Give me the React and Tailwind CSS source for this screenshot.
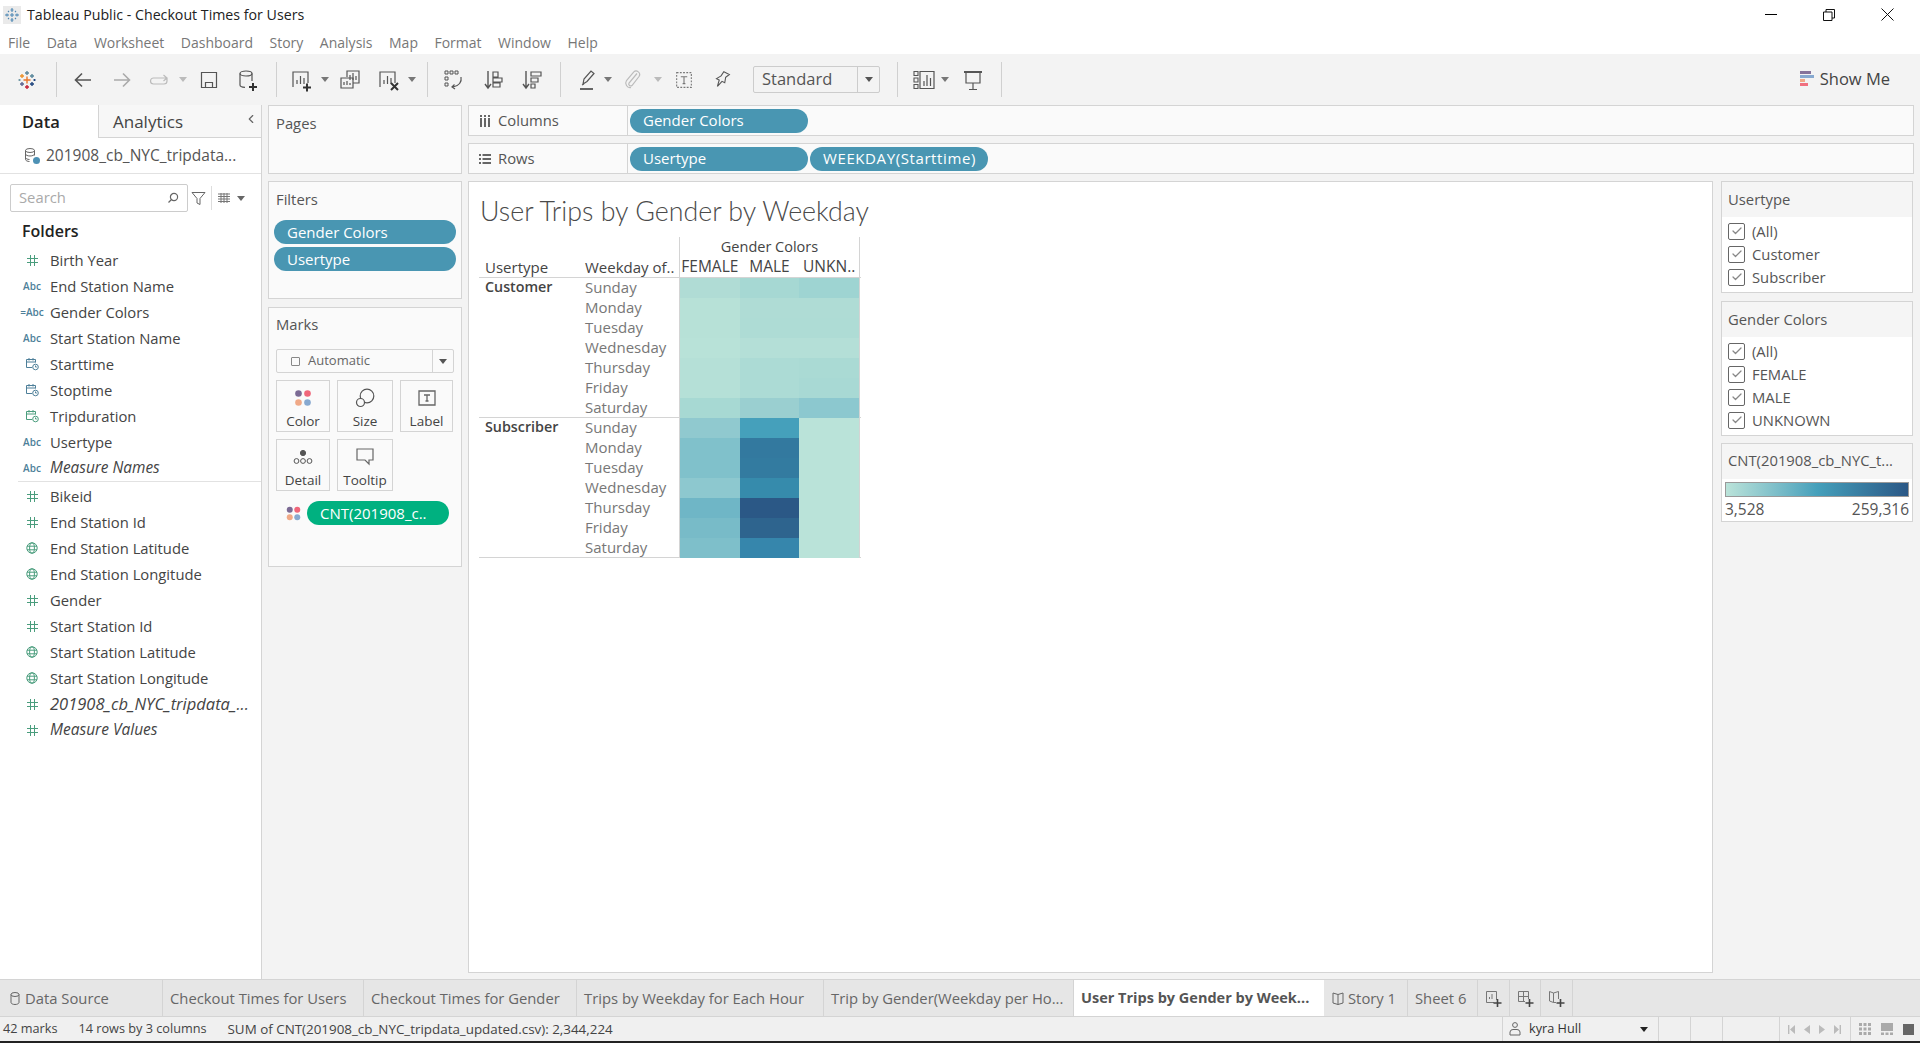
import { Check, ChevronLeft } from "lucide-react";

const G = "#4a9d7d";
const B = "#4d7f99";

const fields = [
  { name: "Birth Year", icon: "hash", color: G },
  { name: "End Station Name", icon: "abc", color: B },
  { name: "Gender Colors", icon: "calc", color: B },
  { name: "Start Station Name", icon: "abc", color: B },
  { name: "Starttime", icon: "date", color: B },
  { name: "Stoptime", icon: "date", color: B },
  { name: "Tripduration", icon: "date", color: G },
  { name: "Usertype", icon: "abc", color: B },
  { name: "Measure Names", icon: "abc", color: B, italic: "text-[15.4px]" },
];

const measures = [
  { name: "Bikeid", icon: "hash", color: G },
  { name: "End Station Id", icon: "hash", color: G },
  { name: "End Station Latitude", icon: "globe", color: G },
  { name: "End Station Longitude", icon: "globe", color: G },
  { name: "Gender", icon: "hash", color: G },
  { name: "Start Station Id", icon: "hash", color: G },
  { name: "Start Station Latitude", icon: "globe", color: G },
  { name: "Start Station Longitude", icon: "globe", color: G },
  { name: "201908_cb_NYC_tripdata_...", icon: "hash", color: G, italic: "text-[16.5px]" },
  { name: "Measure Values", icon: "hash", color: G, italic: "text-[15.5px]" },
];

const days = ["Sunday", "Monday", "Tuesday", "Wednesday", "Thursday", "Friday", "Saturday"];

const customer = [
  ["#b0dcd5", "#a6d8d3", "#9ed4d2"],
  ["#b7e1d7", "#afdcd5", "#afdcd5"],
  ["#b7e1d7", "#aedcd5", "#aedcd5"],
  ["#b8e2d8", "#b4dfd7", "#b4dfd7"],
  ["#b5e0d7", "#acdbd5", "#aadad4"],
  ["#b5e0d7", "#acdbd5", "#a8d9d4"],
  ["#a7d9d3", "#9acfd0", "#8cc8cf"],
];

const subscriber = [
  ["#90c9cf", "#45a0bb", "#bae3d9"],
  ["#80c1cb", "#33799f", "#bae3d9"],
  ["#80c1cb", "#337ba0", "#bae3d9"],
  ["#8dc8cf", "#368bac", "#bae3d9"],
  ["#6fb6c6", "#2b5886", "#bae3d9"],
  ["#78bbc8", "#2e648e", "#bae3d9"],
  ["#7ebfca", "#3686ac", "#bae3d9"],
];

const Icon = ({ children, stroke = "#555", size = 24 }) => (
  <svg width={size} height={size} viewBox="0 0 24 24" fill="none" stroke={stroke} strokeWidth="1.2">
    {children}
  </svg>
);

const Caret = ({ color = "#777" }) => (
  <svg width="8" height="5" viewBox="0 0 8 5" className="shrink-0">
    <path d="M0 0h8L4 5z" fill={color} />
  </svg>
);

const Divider = ({ className }) => <div className={`w-px h-[35px] bg-[#d0d0d0] shrink-0 ${className}`} />;

const Slot = ({ className, children }) => (
  <div className={`w-6 h-6 flex items-center justify-center shrink-0 ${className}`}>{children}</div>
);

const Cross = ({ x, y, s, c }) => (
  <path d={`M${x - s} ${y}H${x + s}M${x} ${y - s}V${y + s}`} stroke={c} strokeWidth="1.4" fill="none" />
);

const TableauLogo = () => (
  <svg width="18" height="20" viewBox="0 0 18 20">
    <Cross x={9} y={10} s={3.5} c="#e8762b" />
    <Cross x={9} y={3} s={2} c="#5b879b" />
    <Cross x={9} y={17} s={2} c="#c72037" />
    <Cross x={4} y={6} s={2} c="#eb912b" />
    <Cross x={14} y={6} s={2} c="#59879b" />
    <Cross x={4} y={14} s={2} c="#5c6692" />
    <Cross x={14} y={14} s={2} c="#1f447e" />
    <Cross x={1.5} y={10} s={1} c="#7099a6" />
    <Cross x={16.5} y={10} s={1} c="#1f457e" />
  </svg>
);

const FieldIcon = ({ type, color }) => {
  if (type === "abc" || type === "calc") {
    return (
      <span className="text-[10px] font-semibold leading-none whitespace-nowrap" style={{ color }}>
        {type === "calc" ? "=Abc" : "Abc"}
      </span>
    );
  }
  if (type === "hash") {
    return (
      <svg width="11" height="11" viewBox="0 0 11 11" fill="none" stroke={color} strokeWidth="1">
        <path d="M3.5 0v11M7.5 0v11M0 3.5h11M0 7.5h11" />
      </svg>
    );
  }
  if (type === "globe") {
    return (
      <svg width="12" height="12" viewBox="0 0 12 12" fill="none" stroke={color} strokeWidth="1">
        <circle cx="6" cy="6" r="5.2" />
        <ellipse cx="6" cy="6" rx="2.4" ry="5.2" />
        <path d="M1 4.2h10M1 7.8h10" />
      </svg>
    );
  }
  return (
    <svg width="14" height="14" viewBox="0 0 14 14" fill="none" stroke={color} strokeWidth="1">
      <path d="M7 10.5H1.5V2.5h9v3M1.5 5h9M4 1v2.5M8 1v2.5" />
      <circle cx="10.5" cy="10" r="2.8" />
      <path d="M10.5 8.5V10h1.3" />
    </svg>
  );
};

const FieldRow = ({ field }) => (
  <div className="h-[26px] flex items-center">
    <div className="w-[20px] ml-[22px] flex justify-center shrink-0">
      <FieldIcon type={field.icon} color={field.color} />
    </div>
    <span className={`ml-[8px] text-[#444] whitespace-nowrap ${field.italic ? `italic ${field.italic}` : "text-[14.8px]"}`}>{field.name}</span>
  </div>
);

const Pill = ({ children, className }) => (
  <div className={`h-6 rounded-full bg-[#4996b2] text-[15px] text-white flex items-center pl-[13px] shrink-0 whitespace-nowrap ${className}`}>
    {children}
  </div>
);

const MarkButton = ({ label, className, children }) => (
  <div className={`h-[52px] border border-[#d4d4d4] flex flex-col items-center justify-end pb-px ${className}`}>
    <div className="h-[26px] mb-px flex items-center justify-center">{children}</div>
    <span className="text-[13.5px] text-[#444] leading-[18px]">{label}</span>
  </div>
);

const FourDots = () => (
  <svg width="18" height="18" viewBox="0 0 18 18">
    <circle cx="4.5" cy="4.5" r="3.3" fill="#7b6a94" />
    <circle cx="13.5" cy="4.5" r="3.3" fill="#f0667a" />
    <circle cx="4.5" cy="13.5" r="3.3" fill="#f0a987" />
    <circle cx="13.5" cy="13.5" r="3.3" fill="#87a9d0" />
  </svg>
);

const Shelf = ({ label, icon, children }) => (
  <div className="h-[31px] flex border-y border-r border-[#d4d4d4] bg-[#fafafa]">
    <div className="w-[160px] border-x border-[#d4d4d4] flex items-center shrink-0">
      <div className="w-[29px] flex justify-center pl-[2px]">{icon}</div>
      <span className="text-[14.8px] text-[#555]">{label}</span>
    </div>
    <div className="flex items-center pl-[2px] gap-[2px]">{children}</div>
  </div>
);

const HeatGroup = ({ label, rows }) => (
  <div className="flex border-b border-[#d4d4d4] h-[140px]">
    <div className="w-[106px] pl-[6px] h-5 pb-[2px] flex items-center text-[14.3px] font-semibold text-[#444]">{label}</div>
    <div className="w-[95px] border-r border-[#d4d4d4] text-[15px] text-[#777]">
      {days.map((d) => (
        <div key={d} className="h-5 pb-[2px] flex items-center leading-none whitespace-nowrap">
          {d}
        </div>
      ))}
    </div>
    <div className="w-[180px] border-r border-[#d4d4d4]">
      {rows.map((r, i) => (
        <div key={i} className="flex h-5">
          {r.map((c, j) => (
            <div key={j} className="w-[60px]" style={{ background: c }} />
          ))}
        </div>
      ))}
    </div>
  </div>
);

const CheckItem = ({ label }) => (
  <div className="h-[23px] flex items-center">
    <div className="w-[17px] h-[17px] border border-[#666] rounded-[2px] flex items-center justify-center bg-white">
      <Check size={12} color="#888" strokeWidth={2.5} />
    </div>
    <span className="ml-[7px] text-[14.8px] text-[#555]">{label}</span>
  </div>
);

const FilterCard = ({ title, items, className }) => (
  <div className={`border border-[#d4d4d4] bg-white ${className}`}>
    <div className="h-[35px] pb-px bg-[#f5f5f5] flex items-center pl-[6px] text-[14.8px] text-[#555]">{title}</div>
    <div className="pl-[6px] pt-[2.5px] pb-[3.5px]">
      {items.map((x) => (
        <CheckItem key={x} label={x} />
      ))}
    </div>
  </div>
);

const Tab = ({ label, className, children }) => (
  <div className={`h-full border-r border-[#d4d4d4] flex items-center text-[14.8px] text-[#666] whitespace-nowrap shrink-0 ${className}`}>
    {children}
    {label}
  </div>
);

const BarsBox = ({ children }) => (
  <Icon>
    <path d="M4 19V4h15v11" />
    <path d="M8 16v-4M11.5 16V8M15 16v-6" />
    {children}
  </Icon>
);

const PlusMark = () => <path d="M14 19.5h8M18 15.5v8" strokeWidth="2" stroke="#333" />;

export default function App() {
  return (
    <div className="w-[1920px] h-[1043px] flex flex-col bg-[#f3f3f3] overflow-hidden font-['Open_Sans',sans-serif]">
      {/* title bar */}
      <div className="h-[28px] bg-white flex items-center shrink-0 pt-[1px]">
        <div className="ml-[3px] w-[18px] h-[18px] bg-[#eaeaea] flex items-center justify-center">
          <svg width="14" height="14" viewBox="0 0 14 14" fill="none" stroke="#4d87b3" strokeWidth="1.1">
            <path d="M7 0v4M5.5 2h3M7 10v4M5.5 12h3M0 7h4M2 5.5v3M10 7h4M12 5.5v3M7 5v4M5 7h4M3 3l1 1M11 3l-1 1M3 11l1-1M11 11l-1-1" />
          </svg>
        </div>
        <span className="ml-[6px] text-[14.2px] text-[#222]">Tableau Public - Checkout Times for Users</span>
        <div className="ml-auto flex items-center">
          <div className="w-[12px] h-px bg-black" />
          <svg width="12" height="12" viewBox="0 0 12 12" fill="none" stroke="#111" className="ml-[46px]">
            <path d="M.5 3h8.5v8.5H.5zM3 3V.5h8.5V9H9" />
          </svg>
          <svg width="13" height="13" viewBox="0 0 13 13" fill="none" stroke="#111" className="ml-[46px] mr-[26px]">
            <path d="M.5.5l12 12M12.5.5l-12 12" />
          </svg>
        </div>
      </div>

      {/* menu */}
      <div className="h-[26px] pt-[2px] bg-white flex items-center pl-2 gap-[16.5px] text-[14px] text-[#777] shrink-0">
        {["File", "Data", "Worksheet", "Dashboard", "Story", "Analysis", "Map", "Format", "Window", "Help"].map((m) => (
          <span key={m}>{m}</span>
        ))}
      </div>

      {/* toolbar */}
      <div className="h-[51px] bg-[#f3f3f3] flex items-center shrink-0 pr-[30px]">
        <Slot className="ml-[15px]"><TableauLogo /></Slot>
        <Divider className="ml-[17px]" />
        <Slot className="ml-[14px]">
          <Icon stroke="#555"><path d="M20 12H5M11 5.5L4.5 12l6.5 6.5" strokeWidth="1.6" /></Icon>
        </Slot>
        <Slot className="ml-[15px]">
          <Icon stroke="#aaa"><path d="M4 12h15M13 5.5l6.5 6.5-6.5 6.5" strokeWidth="1.6" /></Icon>
        </Slot>
        <Slot className="ml-[13px]">
          <Icon stroke="#bbb"><path d="M20 10H6.5a3 3 0 0 0 0 6H17a3 3 0 0 0 3-3v-3M16.5 7l3.5 3-3.5 3" /></Icon>
        </Slot>
        <div className="ml-2 w-2 flex"><Caret color="#bbb" /></div>
        <Slot className="ml-[10px]">
          <Icon><path d="M4.5 4.5h15v15h-15zM8.5 19.5v-5h7v5" /></Icon>
        </Slot>
        <Slot className="ml-[14px]">
          <Icon>
            <ellipse cx="11" cy="5.5" rx="6" ry="2.5" />
            <path d="M5 5.5V17c0 1.2 2 2.2 5 2.4M17 5.5V13" />
            <path d="M14 19h8M18 15v8" strokeWidth="2" stroke="#333" />
          </Icon>
        </Slot>
        <Divider className="ml-[17px]" />
        <Slot className="ml-3"><BarsBox><PlusMark /></BarsBox></Slot>
        <div className="ml-2 w-2 flex"><Caret /></div>
        <Slot className="ml-[9px]">
          <Icon>
            <path d="M9 9V3h12v12h-6" />
            <path d="M12 12V7M15 12V5M18 12V8" />
            <path d="M3 10h12v10H3zM6 17v-3M9 17v-4M12 17v-2" />
          </Icon>
        </Slot>
        <Slot className="ml-[14px]">
          <BarsBox>
            <path d="M15 15l7 7M22 15l-7 7" strokeWidth="2" stroke="#333" />
          </BarsBox>
        </Slot>
        <div className="ml-2 w-2 flex"><Caret /></div>
        <Divider className="ml-[11px]" />
        <Slot className="ml-[13px]">
          <Icon>
            <path d="M4 3h3v3H4zM9 3h3v3H9zM14 3h3v3h-3zM4 9h3v3H4zM4 15h3v3H4z" strokeWidth="1" />
            <path d="M20 9c1 5-2 9-8 10M13.5 16.5L11 19l3 2" />
          </Icon>
        </Slot>
        <Slot className="ml-[17px]">
          <Icon>
            <path d="M6 3v16M3 16l3 4 3-4" strokeWidth="1.4" />
            <path d="M11 4h5v5h-5zM11 10h9v4h-9zM11 15h7v4h-7z" />
          </Icon>
        </Slot>
        <Slot className="ml-[14px]">
          <Icon>
            <path d="M6 3v16M3 16l3 4 3-4" strokeWidth="1.4" />
            <path d="M11 4h10v4h-10zM11 10h7v4h-7zM11 16h4v4h-4z" />
          </Icon>
        </Slot>
        <Divider className="ml-4" />
        <Slot className="ml-[14px]">
          <Icon>
            <path d="M8 16l1-5 7-8 3 2.5-7 8zM7 17l2-1" />
            <path d="M5 21h13" strokeWidth="1.8" />
          </Icon>
        </Slot>
        <div className="ml-[5px] w-2 flex"><Caret /></div>
        <Slot className="ml-2">
          <Icon stroke="#bbb">
            <path d="M17 5.5L9 15a2 2 0 0 0 3 2.5l7-9a3.5 3.5 0 0 0-5.4-4.4L6.5 12.5c-2 3 .5 8 4.5 7" />
          </Icon>
        </Slot>
        <div className="ml-[10px] w-2 flex"><Caret color="#bbb" /></div>
        <Slot className="ml-[10px]">
          <Icon stroke="#777" size={22}>
            <path d="M4 4h16v16H4z" strokeDasharray="2 1.5" />
            <path d="M8.5 8.5h7M12 8.5V16M10.5 16h3" />
          </Icon>
        </Slot>
        <Slot className="ml-[14px]">
          <Icon size={22}>
            <path d="M14 3l6 3-4 3-1 6-3-1.5L7 19l2-7-3-1.5 5-3z" />
          </Icon>
        </Slot>
        <div className="ml-[19px] w-[127px] h-[27px] border border-[#ccc] rounded-[2px] flex items-center shrink-0">
          <span className="flex-1 pl-[8px] text-[16.5px] text-[#555]">Standard</span>
          <div className="w-[22px] h-full border-l border-[#ccc] flex items-center justify-center"><Caret color="#555" /></div>
        </div>
        <Divider className="ml-[17px]" />
        <Slot className="ml-[14px]">
          <Icon>
            <path d="M2 3.5h4v4H2zM2 10h4v4H2zM2 16.5h4v4H2z" strokeWidth="1.1" />
            <path d="M8 3.5h14v17H8zM12 18v-5M15 18V7M18.5 18v-8" />
          </Icon>
        </Slot>
        <div className="ml-[5px] w-2 flex"><Caret /></div>
        <Slot className="ml-3">
          <Icon stroke="#555">
            <path d="M3 4h18" strokeWidth="2" />
            <path d="M5 4v11h14V4M12 15v6M8 21.5h8" />
          </Icon>
        </Slot>
        <Divider className="ml-4" />
        <div className="ml-auto flex items-center -mt-px">
          <svg width="14" height="16" viewBox="0 0 14 16" className="shrink-0">
            <rect x="0" y="0" width="11" height="3" fill="#85739b" />
            <rect x="0" y="4" width="14" height="3" fill="#87a9d0" />
            <rect x="0" y="8" width="5" height="3" fill="#f0a987" />
            <rect x="0" y="12" width="8" height="3" fill="#f0707f" />
          </svg>
          <span className="ml-[6px] text-[16.5px] text-[#444]">Show Me</span>
        </div>
      </div>

      {/* middle */}
      <div className="flex-1 flex min-h-0">
        {/* data pane */}
        <div className="w-[262px] bg-white border-r border-[#d4d4d4] shrink-0 flex flex-col">
          <div className="h-[33px] flex">
            <div className="w-[98px] flex items-center pt-px pl-[22px] text-[16.5px] font-semibold text-[#222]">Data</div>
            <div className="flex-1 bg-[#f7f7f7] border-l border-b border-[#d4d4d4] flex items-center pt-px pl-[14px] relative">
              <span className="text-[17px] text-[#444]">Analytics</span>
              <ChevronLeft size={14} color="#666" className="absolute right-[3px] top-[7px]" />
            </div>
          </div>
          <div className="h-[36px] border-b border-[#e2e2e2] flex items-center pl-[24px]">
            <svg width="17" height="18" viewBox="0 0 17 18" fill="none" stroke="#666" strokeWidth="1">
              <ellipse cx="6" cy="3.5" rx="4.5" ry="2" />
              <path d="M1.5 3.5v9c0 1 2 2 4 2M10.5 3.5v5M1.5 7c0 1 2 2 4.5 2s4.5-1 4.5-2M1.5 10.5c0 1 2 2 4 2" />
              <circle cx="12.5" cy="13.5" r="3.5" fill="#4d91b5" stroke="none" />
            </svg>
            <span className="ml-[5px] text-[15.5px] text-[#555]">201908_cb_NYC_tripdata...</span>
          </div>
          <div className="flex items-center mt-[10px]">
            <div className="ml-[10px] w-[178px] h-[28px] border border-[#ccc] rounded-[2px] flex items-center px-[8px]">
              <span className="text-[14.8px] text-[#aaa] pb-px">Search</span>
              <svg width="12" height="12" viewBox="0 0 12 12" fill="none" stroke="#666" strokeWidth="1.2" className="ml-auto">
                <circle cx="7" cy="5" r="3.6" />
                <path d="M4.5 7.5L1.5 10.5" />
              </svg>
            </div>
            <svg width="15" height="15" viewBox="0 0 15 15" fill="none" stroke="#666" className="ml-[3px]">
              <path d="M1 1.5h13L9 7.5v6l-3-1.5V7.5z" />
            </svg>
            <div className="ml-[5px] w-px h-[24px] bg-[#ddd]" />
            <svg width="12" height="10" viewBox="0 0 12 10" fill="none" stroke="#777" className="ml-[6px]">
              <path d="M0 1h12M0 3.5h12M0 6h12M0 8.5h12M3 0v10M6 0v10M9 0v10" strokeWidth="1" />
            </svg>
            <div className="ml-[7px] flex"><Caret color="#666" /></div>
          </div>
          <div className="mt-[7px] pl-[22px] text-[16px] font-semibold text-[#222] h-[24px] flex items-center">Folders</div>
          <div className="mt-[4px]">
            {fields.map((f) => (
              <FieldRow key={f.name} field={f} />
            ))}
          </div>
          <div className="ml-[18px] h-px bg-[#e2e2e2] mb-px" />
          <div>
            {measures.map((f) => (
              <FieldRow key={f.name} field={f} />
            ))}
          </div>
        </div>

        {/* pages, filters, marks */}
        <div className="w-[194px] ml-[6px] shrink-0 flex flex-col gap-[7px]">
          <div className="h-[69px] border border-[#d4d4d4] bg-[#fafafa] pl-[7px] pt-[6px] text-[14.8px] text-[#555]">Pages</div>
          <div className="h-[118px] border border-[#d4d4d4] bg-[#fafafa] px-[5px]">
            <div className="h-[34px] flex items-center pl-[2px] text-[14.8px] text-[#555]">Filters</div>
            <div className="flex flex-col gap-[3px] mt-[4px]">
              <Pill className="pl-[12px]">Gender Colors</Pill>
              <Pill className="pl-[12px]">Usertype</Pill>
            </div>
          </div>
          <div className="mt-px h-[260px] border border-[#d4d4d4] bg-[#fafafa] px-[7px]">
            <div className="h-[32px] flex items-center text-[14.8px] text-[#555]">Marks</div>
            <div className="mt-[9px] h-[24px] border border-[#d4d4d4] rounded-[2px] flex items-center">
              <div className="flex-1 flex items-center pl-[14px]">
                <div className="w-[9px] h-[9px] border border-[#888] rounded-[1px]" />
                <span className="ml-[8px] text-[13px] text-[#666]">Automatic</span>
              </div>
              <div className="w-[21px] h-full border-l border-[#d4d4d4] flex items-center justify-center"><Caret color="#555" /></div>
            </div>
            <div className="mt-[7px] flex gap-[7px]">
              <MarkButton label="Color" className="w-[54px]"><FourDots /></MarkButton>
              <MarkButton label="Size" className="w-[56px]">
                <svg width="20" height="20" viewBox="0 0 20 20" fill="none" stroke="#555" strokeWidth="1.2">
                  <circle cx="12" cy="8" r="6.8" />
                  <circle cx="5.5" cy="14.5" r="4" fill="#fafafa" />
                </svg>
              </MarkButton>
              <MarkButton label="Label" className="w-[53px]">
                <svg width="18" height="16" viewBox="0 0 18 16" fill="none" stroke="#666" strokeWidth="1.3">
                  <path d="M1 1h16v14H1z" />
                  <path d="M6 5h6M9 5v6M7.5 11h3" />
                </svg>
              </MarkButton>
            </div>
            <div className="mt-[7px] flex gap-[7px]">
              <MarkButton label="Detail" className="w-[54px]">
                <svg width="20" height="16" viewBox="0 0 20 16" fill="none" stroke="#555">
                  <circle cx="10" cy="4" r="2.6" fill="#555" />
                  <circle cx="3.5" cy="12" r="2.4" />
                  <circle cx="10" cy="12" r="2.4" />
                  <circle cx="16.5" cy="12" r="2.4" />
                </svg>
              </MarkButton>
              <MarkButton label="Tooltip" className="w-[56px]">
                <svg width="18" height="18" viewBox="0 0 18 18" fill="none" stroke="#666" strokeWidth="1.2">
                  <path d="M1 1h16v11h-4v4l-4-4H1z" />
                </svg>
              </MarkButton>
            </div>
            <div className="mt-[10px] flex items-center pl-[10px]">
              <svg width="15" height="15" viewBox="0 0 18 18">
                <circle cx="4.5" cy="4.5" r="3.6" fill="#7b6a94" />
                <circle cx="13.5" cy="4.5" r="3.6" fill="#f0667a" />
                <circle cx="4.5" cy="13.5" r="3.6" fill="#f0a987" />
                <circle cx="13.5" cy="13.5" r="3.6" fill="#87a9d0" />
              </svg>
              <div className="ml-[6px] w-[142px] h-6 rounded-full bg-[#00b180] text-[15px] text-white flex items-center pl-[13px] whitespace-nowrap">CNT(201908_c..</div>
            </div>
          </div>
        </div>

        {/* shelves and viz */}
        <div className="ml-[6px] w-[1446px] shrink-0 flex flex-col">
          <Shelf
            label="Columns"
            icon={
              <svg width="12" height="12" viewBox="0 0 12 12" fill="#666">
                <path d="M1 3h2v9H1zM5 3h2v9H5zM9 3h2v9H9zM1 0h2v2H1zM5 0h2v2H5zM9 0h2v2H9z" />
              </svg>
            }
          >
            <Pill className="w-[178px]">Gender Colors</Pill>
          </Shelf>
          <div className="mt-[7px]">
            <Shelf
              label="Rows"
              icon={
                <svg width="12" height="10" viewBox="0 0 12 10" fill="#666">
                  <path d="M0 0h2v2H0zM3.5 0H12v2H3.5zM0 4h2v2H0zM3.5 4H12v2H3.5zM0 8h2v2H0zM3.5 8H12v2H3.5z" />
                </svg>
              }
            >
              <Pill className="w-[178px]">Usertype</Pill>
              <Pill className="w-[178px] text-[15.8px] tracking-[0.6px]">WEEKDAY(Starttime)</Pill>
            </Shelf>
          </div>

          <div className="mt-[7px] h-[792px] flex">
            <div className="w-[1245px] border border-[#d4d4d4] bg-white shrink-0 pl-[10px]">
              <div className="h-[55px] flex items-center pl-[1px] pt-[3px] text-[26.8px] font-light text-[#4a4a4a] whitespace-nowrap font-['Lato',sans-serif]">User Trips by Gender by Weekday</div>
              <div className="w-[382px]">
                <div className="flex h-[41px] border-b border-[#d4d4d4]">
                  <div className="w-[201px] border-r border-[#d4d4d4] flex items-end text-[15px] font-medium text-[#444] leading-[18px] pb-[1px]">
                    <span className="pl-[6px] w-[106px]">Usertype</span>
                    <span className="whitespace-nowrap">Weekday of..</span>
                  </div>
                  <div className="w-[180px] border-r border-[#d4d4d4] text-[14.5px] text-[#444] font-medium">
                    <div className="h-5 flex items-center justify-center">Gender Colors</div>
                    <div className="h-5 flex items-center text-[15.5px]">
                      <span className="w-[60px] text-center">FEMALE</span>
                      <span className="w-[60px] text-center">MALE</span>
                      <span className="w-[60px] text-center">UNKN..</span>
                    </div>
                  </div>
                </div>
                <HeatGroup label="Customer" rows={customer} />
                <HeatGroup label="Subscriber" rows={subscriber} />
              </div>
            </div>

            <div className="ml-[8px] w-[192px] shrink-0 flex flex-col gap-[7px]">
              <FilterCard title="Usertype" items={["(All)", "Customer", "Subscriber"]} className="mb-px" />
              <FilterCard title="Gender Colors" items={["(All)", "FEMALE", "MALE", "UNKNOWN"]} />
              <div className="h-[79px] border border-[#d4d4d4] bg-white">
                <div className="h-[35px] pb-[2px] bg-[#f5f5f5] flex items-center pl-[6px] text-[14.8px] text-[#555] whitespace-nowrap">CNT(201908_cb_NYC_t...</div>
                <div className="px-[3px]">
                  <div className="mt-[3px] h-[15px] border border-[#999] bg-linear-to-r from-[#bae3d9] via-[#45a0bb] to-[#2b5886]" />
                  <div className="mt-[3px] flex justify-between text-[15.5px] text-[#555] leading-[18px]">
                    <span>3,528</span>
                    <span>259,316</span>
                  </div>
                </div>
              </div>
            </div>
          </div>
        </div>
      </div>

      {/* sheet tabs */}
      <div className="h-[37px] bg-[#e6e6e6] border-t border-[#d4d4d4] flex items-stretch shrink-0">
        <Tab label="Data Source" className="w-[163px] pl-[10px]">
          <svg width="10" height="13" viewBox="0 0 10 13" fill="none" stroke="#666" className="mr-[5px]">
            <ellipse cx="5" cy="2.5" rx="4" ry="2" />
            <path d="M1 2.5v8c0 1 1.8 2 4 2s4-1 4-2v-8" />
          </svg>
        </Tab>
        <Tab label="Checkout Times for Users" className="w-[201px] pl-[7px]" />
        <Tab label="Checkout Times for Gender" className="w-[213px] pl-[7px]" />
        <Tab label="Trips by Weekday for Each Hour" className="w-[247px] pl-[7px]" />
        <Tab label="Trip by Gender(Weekday per Ho..." className="w-[250px] pl-[7px]" />
        <div className="w-[250px] h-full bg-white flex items-center pl-[7px] text-[14.5px] font-bold text-[#555] whitespace-nowrap shrink-0">User Trips by Gender by Week...</div>
        <Tab label="Story 1" className="w-[84px] pl-[8px]">
          <svg width="12" height="13" viewBox="0 0 12 13" fill="none" stroke="#666" className="mr-[4px]">
            <path d="M1 1l5 1.5L11 1v10l-5 1.5L1 11zM6 2.5v10" />
          </svg>
        </Tab>
        <Tab label="Sheet 6" className="w-[70px] pl-[7px]" />
        <Tab className="w-[32px] justify-center">
          <svg width="17" height="17" viewBox="0 0 17 17" fill="none" stroke="#777">
            <path d="M1.5 1.5h10V10M1.5 1.5v11H9M4.5 9V7M7 9V4" />
            <path d="M8.5 13h8M12.5 9v8" stroke="#444" strokeWidth="1.6" />
          </svg>
        </Tab>
        <Tab className="w-[31px] justify-center">
          <svg width="17" height="17" viewBox="0 0 17 17" fill="none" stroke="#777">
            <path d="M1.5 1.5h10V9M1.5 1.5v10H8M1.5 6.5h10M6.5 1.5v10" />
            <path d="M8.5 13h8M12.5 9v8" stroke="#444" strokeWidth="1.6" />
          </svg>
        </Tab>
        <Tab className="w-[32px] justify-center">
          <svg width="17" height="17" viewBox="0 0 17 17" fill="none" stroke="#777">
            <path d="M1.5 1.5l4 1.5 5-1.5V9M1.5 1.5V11l4 1.5H8M5.5 3v9.5" />
            <path d="M8.5 13h8M12.5 9v8" stroke="#444" strokeWidth="1.6" />
          </svg>
        </Tab>
      </div>

      {/* status bar */}
      <div className="h-[25px] bg-[#f0f0f0] border-t border-[#d4d4d4] flex items-center shrink-0 text-[12.7px] text-[#444]">
        <span className="ml-[3px]">42 marks</span>
        <span className="ml-[21px]">14 rows by 3 columns</span>
        <span className="ml-[21px] text-[13.4px]">SUM of CNT(201908_cb_NYC_tripdata_updated.csv): 2,344,224</span>
        <div className="ml-auto flex items-stretch h-full">
          <div className="w-[156px] border-l border-[#d4d4d4] flex items-center pl-[6px]">
            <svg width="12" height="14" viewBox="0 0 12 14" fill="none" stroke="#666">
              <circle cx="6" cy="3" r="2.4" />
              <path d="M1 13V10a3 3 0 0 1 3-2.5h4A3 3 0 0 1 11 10v3z" />
            </svg>
            <span className="ml-[8px] text-[#333]">kyra Hull</span>
            <div className="ml-auto mr-[10px] flex"><Caret color="#222" /></div>
          </div>
          <div className="w-[32px] border-l border-[#d4d4d4]" />
          <div className="w-[32px] border-l border-[#d4d4d4]" />
          <div className="w-[57px] border-l border-[#d4d4d4]" />
          <div className="w-[71px] border-l border-[#d4d4d4] flex items-center gap-[9px] pl-[8px]">
            <svg width="7" height="9" viewBox="0 0 7 9" fill="#bbb"><path d="M0 0h1.4v9H0zM7 0v9L2 4.5z" /></svg>
            <svg width="6" height="9" viewBox="0 0 6 9" fill="#bbb"><path d="M6 0v9L0 4.5z" /></svg>
            <svg width="6" height="9" viewBox="0 0 6 9" fill="#bbb"><path d="M0 0v9l6-4.5z" /></svg>
            <svg width="7" height="9" viewBox="0 0 7 9" fill="#bbb"><path d="M0 0v9l5-4.5zM5.6 0H7v9H5.6z" /></svg>
          </div>
          <div className="w-[70px] border-l border-[#d4d4d4] flex items-center pl-[8px] gap-[10px]">
            <svg width="12" height="12" viewBox="0 0 12 12" fill="#aaa"><path d="M0 0h3v3H0zM4.5 0h3v3h-3zM9 0h3v3H9zM0 4.5h3v3H0zM4.5 4.5h3v3h-3zM9 4.5h3v3H9zM0 9h3v3H0zM4.5 9h3v3h-3zM9 9h3v3H9z" /></svg>
            <svg width="12" height="12" viewBox="0 0 12 12" fill="#aaa"><path d="M0 0h12v8H0zM0 9.5h3V12H0zM4.5 9.5h3V12h-3zM9 9.5h3V12H9z" /></svg>
            <div className="w-[11px] h-[11px] bg-[#666]" />
          </div>
        </div>
      </div>
      <div className="h-[2px] bg-[#222] shrink-0" />
    </div>
  );
}
